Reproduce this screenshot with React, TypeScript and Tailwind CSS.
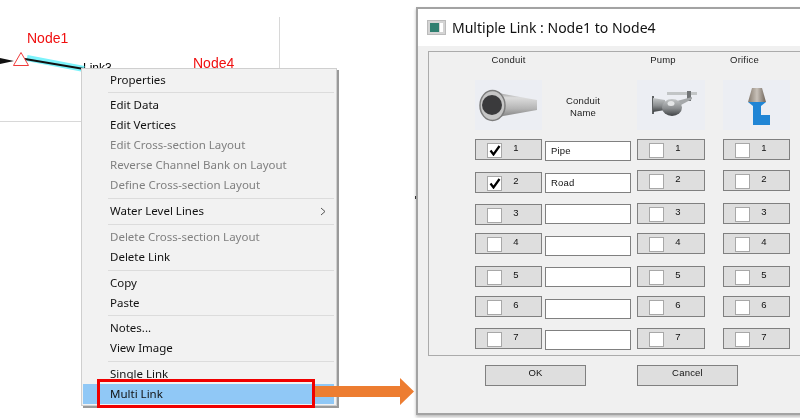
import React from "react";

type MenuEntry =
  | { sep: string }
  | { label: string; disabled?: boolean; arrow?: boolean; active?: boolean };

const menu: MenuEntry[] = [
  { label: "Properties" },
  { sep: "h-[5px]" },
  { label: "Edit Data" },
  { label: "Edit Vertices" },
  { label: "Edit Cross-section Layout", disabled: true },
  { label: "Reverse Channel Bank on Layout", disabled: true },
  { label: "Define Cross-section Layout", disabled: true },
  { sep: "h-[6px]" },
  { label: "Water Level Lines", arrow: true },
  { sep: "h-[6px]" },
  { label: "Delete Cross-section Layout", disabled: true },
  { label: "Delete Link" },
  { sep: "h-[6px]" },
  { label: "Copy" },
  { label: "Paste" },
  { sep: "h-[5px]" },
  { label: "Notes..." },
  { label: "View Image" },
  { sep: "h-[6px]" },
  { label: "Single Link" },
  { label: "Multi Link", active: true },
];

const conduitGaps = ["mt-[9px]", "mt-[12px]", "mt-[11px]", "mt-[8px]", "mt-[12px]", "mt-[9px]", "mt-[11px]"];
const nameGaps = ["mt-[11px]", "mt-[12px]", "mt-[11px]", "mt-[12px]", "mt-[11px]", "mt-[12px]", "mt-[11px]"];
const pumpGaps = ["mt-[9px]", "mt-[10px]", "mt-[12px]", "mt-[9px]", "mt-[12px]", "mt-[9px]", "mt-[11px]"];
const names = ["Pipe", "Road", "", "", "", "", ""];

const TickBox = ({ n, checked, className }: { n: number; checked?: boolean; className: string }) => (
  <div className={`relative h-[21px] w-full border border-[#808080] bg-[#dedede] ${className}`}>
    <div className="absolute left-[11px] top-[3px] flex h-[15px] w-[15px] items-center justify-center border border-[#a8a8a8] bg-white">
      {checked && (
        <svg width="12" height="11" viewBox="0 0 12 11">
          <path d="M1.5 5.5 L4.5 9.5 L10.5 1" fill="none" stroke="#000" strokeWidth="2.2" />
        </svg>
      )}
    </div>
    <span className="absolute left-[36px] top-[1px] w-[8px] text-center text-[9.5px] leading-[14px] text-[#111]">{n}</span>
  </div>
);

const Heading = ({ children, className = "" }: { children: React.ReactNode; className?: string }) => (
  <div className={`flex h-[16px] items-center justify-center text-[9.5px] tracking-[0.2px] text-[#222] ${className}`}>
    {children}
  </div>
);

const PipeArt = () => (
  <svg width="67" height="50" viewBox="0 0 67 50">
    <defs>
      <linearGradient id="pipe" x1="0" y1="0" x2="0" y2="1">
        <stop offset="0" stopColor="#777" />
        <stop offset="0.25" stopColor="#dcdcdc" />
        <stop offset="0.6" stopColor="#b5b5b5" />
        <stop offset="1" stopColor="#6a6a6a" />
      </linearGradient>
    </defs>
    <path d="M17 10 L28 14 L62 20 L62 30 L28 36 L17 41 Z" fill="url(#pipe)" />
    <ellipse cx="17.5" cy="25.5" rx="12.5" ry="15" fill="#c6c6c6" stroke="#7d7d7d" strokeWidth="1.5" />
    <circle cx="17" cy="25" r="10" fill="#3a3a3c" />
  </svg>
);

const PumpArt = () => (
  <svg width="68" height="50" viewBox="0 0 68 50">
    <defs>
      <linearGradient id="pump" x1="0" y1="0" x2="0" y2="1">
        <stop offset="0" stopColor="#c4c7c8" />
        <stop offset="0.55" stopColor="#8b8e90" />
        <stop offset="1" stopColor="#3f4244" />
      </linearGradient>
    </defs>
    <rect x="30" y="12" width="30" height="3" fill="#c2c5c6" />
    <rect x="50" y="11" width="4" height="10" fill="#717476" />
    <path d="M40 21 L55 17 L55 19 L44 25 Z" fill="#a5a8aa" />
    <rect x="15" y="16" width="2" height="18" fill="#5e6163" />
    <path d="M16 18 L28 20 L28 30 L16 32 Z" fill="url(#pump)" />
    <ellipse cx="35" cy="27.5" rx="10" ry="8.5" fill="url(#pump)" />
    <ellipse cx="34" cy="23.5" rx="3.5" ry="2.5" fill="#e4e6e7" />
  </svg>
);

const OrificeArt = () => (
  <svg width="67" height="50" viewBox="0 0 67 50">
    <defs>
      <linearGradient id="cap" x1="0" y1="0" x2="1" y2="0">
        <stop offset="0" stopColor="#84796d" />
        <stop offset="0.5" stopColor="#c8c1b9" />
        <stop offset="1" stopColor="#6d6258" />
      </linearGradient>
    </defs>
    <path d="M29 8 L39 8 L43 22 L25 22 Z" fill="url(#cap)" />
    <path d="M25 22 L43 22 L38 26 L38 35 L47 35 L47 45 L30 45 L30 26 Z" fill="#2085d5" />
  </svg>
);

const App = () => {
  return (
    <div className="relative flex h-[418px] w-[800px] overflow-hidden bg-white font-['Liberation_Sans',sans-serif] blur-[0.4px]">
      {/* drawing canvas behind the context menu */}
      <div className="relative h-full w-[416px] shrink-0">
        <div className="absolute left-[279px] top-[17px] h-[52px] w-px bg-[#d8d8d8]" />
        <div className="absolute left-0 top-[121px] h-px w-[82px] bg-[#d8d8d8]" />
        <span className="absolute left-[27px] top-[30px] text-[14px] leading-[16px] text-[#f01010]">Node1</span>
        <span className="absolute left-[193px] top-[55px] text-[14px] leading-[16px] text-[#f01010]">Node4</span>
        <span className="absolute left-[83px] top-[61px] text-[12px] leading-[14px] text-black">Link3</span>
        <svg className="absolute left-0 top-0" width="100" height="80" viewBox="0 0 100 80">
          <path d="M27 58 L84 69" stroke="#7df3fb" strokeWidth="6" />
          <path d="M25 59 L84 69" stroke="#111" strokeWidth="2" />
          <path d="M0 58 L14 61 L0 64 Z" fill="#111" />
          <path d="M21 52.5 L28.5 65.5 L13.5 65.5 Z" fill="white" stroke="#ef3a3a" strokeWidth="1" />
        </svg>

        {/* context menu */}
        <div className="absolute left-[81px] top-[68px] flex h-[338px] w-[256px] flex-col border border-[#cfcfcf] bg-[#f2f2f2] pl-px pr-[2px] pt-[1px] font-['Noto_Sans',sans-serif] shadow-[2px_2px_0_#9a9a9a]">
          {menu.map((item, i) =>
            "sep" in item ? (
              <div key={i} className={`flex items-center pl-[25px] ${item.sep}`}>
                <div className="h-px w-full bg-[#dcdcdc]" />
              </div>
            ) : (
              <div
                key={i}
                className={`flex h-[20px] shrink-0 items-center justify-between pl-[27px] pr-[8px] text-[11.5px] ${
                  item.disabled ? "text-[#808080]" : "text-[#111]"
                } ${item.active ? "bg-[#90c8f6]" : ""}`}
              >
                <span>{item.label}</span>
                {item.arrow && (
                  <svg width="6" height="9" viewBox="0 0 6 9">
                    <path d="M1 1 L5 4.5 L1 8" fill="none" stroke="#555" />
                  </svg>
                )}
              </div>
            )
          )}
        </div>
        <div className="absolute left-[97px] top-[379px] h-[29px] w-[218px] border-[3px] border-[#f00000]" />
        <div className="absolute left-[415px] top-[196px] h-[3px] w-px bg-[#333]" />
      </div>

      {/* Multiple Link dialog */}
      <div className="mt-[7px] flex h-[408px] w-[400px] shrink-0 flex-col border-2 border-[#a3a3a3] bg-[#f0f0f0] shadow-[0_2px_3px_#bbb]">
        <div className="flex h-[37px] shrink-0 items-center gap-[6px] bg-white pl-[9px] font-['Noto_Sans',sans-serif] text-[14px] text-[#111]">
          <div className="flex h-[15px] w-[19px] gap-px border border-[#bbb] bg-[#d4d4d4] p-[2px]">
            <div className="w-[9px] bg-[#2f7f70]" />
            <div className="flex-1 bg-white" />
          </div>
          <span>Multiple Link : Node1 to Node4</span>
        </div>

        <div className="ml-[10px] mt-[5px] flex h-[305px] w-[400px] shrink-0 gap-[3px] border border-[#ababab] pl-[46px]">
          <div className="flex w-[67px] flex-col">
            <Heading>Conduit</Heading>
            <div className="mt-[12px] flex h-[50px] items-center justify-center bg-[#eceef3]">
              <PipeArt />
            </div>
            {conduitGaps.map((gap, i) => (
              <TickBox key={i} n={i + 1} checked={i < 2} className={gap} />
            ))}
          </div>

          <div className="flex w-[86px] flex-col">
            <div className="h-[16px]" />
            <div className="mt-[12px] flex h-[50px] flex-col items-center justify-center pr-[10px] pt-[4px] text-center text-[9.5px] leading-[12px] tracking-[0.2px] text-[#222]">
              <span>Conduit</span>
              <span>Name</span>
            </div>
            {nameGaps.map((gap, i) => (
              <div
                key={i}
                className={`flex h-[20px] shrink-0 items-center border border-[#808080] bg-white pl-[5px] text-[9.5px] tracking-[0.2px] text-[#111] ${gap}`}
              >
                {names[i]}
              </div>
            ))}
          </div>

          <div className="ml-[3px] flex w-[68px] flex-col">
            <Heading className="pr-[16px]">Pump</Heading>
            <div className="mt-[12px] flex h-[50px] items-center justify-center bg-[#eceef3]">
              <PumpArt />
            </div>
            {pumpGaps.map((gap, i) => (
              <TickBox key={i} n={i + 1} className={gap} />
            ))}
          </div>

          <div className="ml-[15px] flex w-[67px] flex-col">
            <Heading className="pr-[24px]">Orifice</Heading>
            <div className="mt-[12px] flex h-[50px] items-center justify-center bg-[#eceef3]">
              <OrificeArt />
            </div>
            {pumpGaps.map((gap, i) => (
              <TickBox key={i} n={i + 1} className={gap} />
            ))}
          </div>
        </div>

        <div className="ml-[67px] mt-[9px] flex gap-[51px]">
          <div className="flex h-[21px] w-[101px] items-start justify-center border border-[#808080] bg-[#dedede] text-[9.5px] leading-[14px] tracking-[0.2px] text-[#111]">
            OK
          </div>
          <div className="flex h-[21px] w-[101px] items-start justify-center border border-[#808080] bg-[#dedede] text-[9.5px] leading-[14px] tracking-[0.2px] text-[#111]">
            Cancel
          </div>
        </div>
      </div>

      {/* orange arrow from the menu item to the dialog */}
      <svg className="absolute left-[315px] top-[376px]" width="100" height="32" viewBox="0 0 100 32">
        <path d="M0 10 L85 10 L85 2 L99 15.5 L85 29 L85 21 L0 21 Z" fill="#ed7d31" />
      </svg>
    </div>
  );
};

export default App;
